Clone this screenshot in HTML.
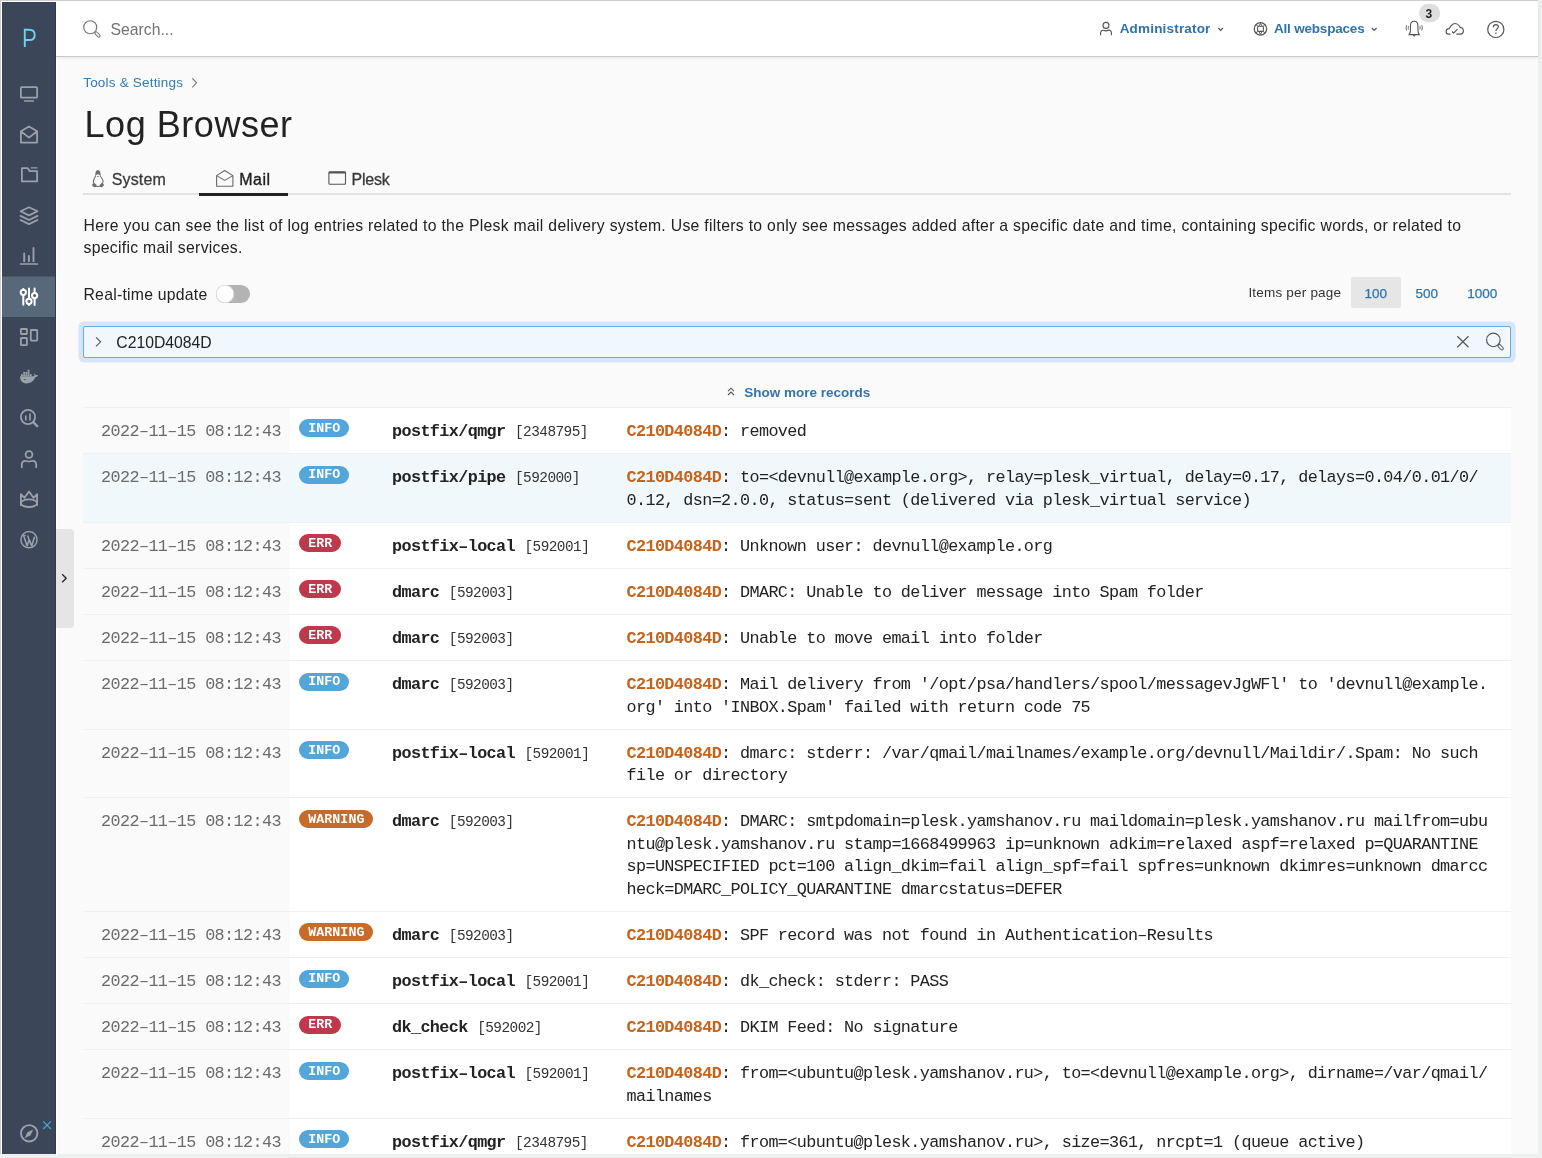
<!DOCTYPE html>
<html><head><meta charset="utf-8">
<style>
*{box-sizing:border-box;margin:0;padding:0}
html,body{width:1542px;height:1158px;overflow:hidden;background:#eef0ef;font-family:"Liberation Sans",sans-serif}
#frame{position:absolute;left:0;top:0;width:1538px;height:1154px;background:#fafafa;border-top:1px solid #cfcfd1;border-left:1px solid #cfcfd1;overflow:hidden}
#inner{position:absolute;left:0;top:0;width:1537px;height:1153px;border-top:1px solid #fff;border-left:1px solid #fff}
#sidebar{position:absolute;left:2px;top:2px;width:54px;height:1152px;background:#3b4758;border-right:1px solid #313c4c}
#wline{position:absolute;left:56px;top:56px;width:1px;height:1100px;background:#fff}
#header{position:absolute;left:56px;top:1px;width:1482px;height:55px;background:#fff;box-shadow:0 1px 0 #c8c8ca,0 2px 3px rgba(0,0,0,.08)}
.abs{position:absolute}
.mono{font-family:"Liberation Mono",monospace}
a{text-decoration:none}
body>*{will-change:transform}
/*TCSS*/
#table{position:absolute;left:83px;top:0;width:1428px;height:1154px;overflow:hidden}
.row{position:absolute;left:0;width:1428px;background:#fff;border-top:1px solid #f0f0f0;font-family:"Liberation Mono",monospace;font-size:16.8px;letter-spacing:-0.61px;line-height:22.5px;color:#222;white-space:nowrap}
.dcol{position:absolute;left:0;top:0;width:207px;background:#fafafa}
.date{position:absolute;left:18.1px;top:13px;color:#6b6b6b}
.badge{position:absolute;left:216.1px;top:11.4px;height:18px;border-radius:9px;padding:0.8px 8.6px 0 9.2px;font-size:13.3px;line-height:17.2px;font-weight:bold;color:#fff;letter-spacing:0.04px}
.prog{position:absolute;left:309px;top:13px}
.prog b{color:#222}
.pid{font-size:14.4px;letter-spacing:-0.54px;color:#333}
.msg{position:absolute;left:543.5px;top:13px}
.id{color:#c6621a}
/*/TCSS*/</style></head>
<body>
<div id="frame"><div id="inner"></div></div>
<div id="sidebar"></div>
<div id="wline"></div>
<svg class="abs" style="left:0;top:0" width="56" height="1158" viewBox="0 0 56 1158">
 <rect x="2" y="276.5" width="53" height="40.5" fill="#58687b"/>

 <g fill="none" stroke="#fff" stroke-width="2" stroke-linecap="round">
  <path d="M23.3 289 V290 M23.3 295 V304.8 M29 288.6 V298.7 M29 304 V305 M34.6 288.6 V292.7 M34.6 298.5 V305"/>
  <circle cx="23.3" cy="292.3" r="2.6"/>
  <circle cx="29" cy="301.3" r="2.6"/>
  <circle cx="34.6" cy="295.6" r="2.6"/>
 </g>
 <!-- P logo -->
 <path d="M24.8 47 V29.8 H29.4 C33 29.8 34.7 31.9 34.7 34.9 C34.7 37.9 33 40 29.4 40 H24.8" fill="none" stroke="#6fcff5" stroke-width="1.9"/>
 <g fill="none" stroke="#9aa1ab" stroke-width="1.8" stroke-linejoin="round" stroke-linecap="round">
  <!-- monitor -->
  <rect x="20.9" y="87.1" width="16.2" height="10.6" rx="0.8"/>
  <path d="M24.6 100.9 H33.4" stroke-width="1.5"/>
  <!-- envelope -->
  <path d="M20.9 131.3 L29 126.4 L37.1 131.3 V142.6 H20.9 Z M20.9 131.3 L29 137.6 L37.1 131.3"/>
  <!-- folder -->
  <path d="M21.9 168.1 H27.6 L29.6 171.1 H37.1 V181.4 H21.9 Z"/>
  <path d="M31.3 167.9 H37" stroke-width="1.4"/>
  <!-- layers -->
  <path d="M20.5 211.2 L29 207.2 L37.5 211.2 L29 215.4 Z"/>
  <path d="M20.5 215.9 L29 220 L37.5 215.9"/>
  <path d="M20.5 220 L29 224.1 L37.5 220"/>
  <!-- chart -->
  <path d="M24.2 253.5 V261.2 M28.9 256 V261.2 M33.5 248 V261.2" stroke-width="1.9"/>
  <path d="M20.6 264 H37.4" stroke-width="1.7"/>
  <!-- dashboard -->
  <rect x="20.9" y="329" width="6" height="5" rx="0.5"/>
  <rect x="20.9" y="338" width="6" height="7.2" rx="0.5"/>
  <rect x="30.8" y="330" width="6.4" height="10.6" rx="0.5"/>
  <!-- search chart -->
  <circle cx="28" cy="417" r="7.1"/>
  <path d="M33.2 422.2 L37.2 426.2" stroke-width="2.4"/>
  <path d="M25.8 416 V420 M30 414 V420" stroke-width="1.6"/>
  <!-- user -->
  <circle cx="29" cy="454.5" r="3.4"/>
  <path d="M21.8 467.2 V464.6 C21.8 462 23.5 460.8 25.5 460.8 C27.3 460.8 27.8 461.6 29 461.6 C30.2 461.6 30.7 460.8 32.5 460.8 C34.5 460.8 36.2 462 36.2 464.6 V467.2"/>
  <!-- crown -->
  <path d="M20.9 505 V494.2 L24.5 497.8 L29 491.5 L33.5 497.8 L37.1 494.2 V505"/>
  <ellipse cx="29" cy="503.2" rx="8.1" ry="3.8"/>
  <!-- wordpress -->
  <circle cx="29" cy="539.7" r="8.1" stroke-width="1.5"/>
 </g>
 <!-- docker -->
 <g fill="#9aa1ab">
  <path d="M19.9 376.3 H34.2 C34.6 375.6 34.5 374.6 34.1 373.2 C35 373.6 35.4 374.5 35.6 375.2 C36.5 375 37.3 375.2 38 375.5 C37.3 376.6 36.3 377.2 35.3 377.2 C34 380.8 30.5 383.4 26.3 383.4 C22.4 383.4 20.1 380.6 19.9 376.3 Z"/>
  <rect x="21" y="374.2" width="1.9" height="1.9"/><rect x="23.2" y="374.2" width="1.9" height="1.9"/><rect x="25.4" y="374.2" width="1.9" height="1.9"/><rect x="27.6" y="374.2" width="1.9" height="1.9"/><rect x="29.8" y="374.2" width="1.9" height="1.9"/>
  <rect x="23.2" y="372" width="1.9" height="1.9"/><rect x="25.4" y="372" width="1.9" height="1.9"/><rect x="27.6" y="372" width="1.9" height="1.9"/>
  <rect x="27.6" y="369.8" width="1.9" height="1.9"/>
 </g>
 <path d="M24.3 379.6 h1.3" stroke="#3b4758" stroke-width="1"/>
 <!-- WP W -->
 <g fill="none" stroke="#9aa1ab" stroke-width="1.6" stroke-linejoin="bevel"><path d="M23.6 535.6 L27.1 545.9 L29.2 539.6 L31.7 545.9 L34.6 536.8"/><path d="M22.2 535.3 H26" stroke-width="1"/><path d="M27.6 535.6 L29.9 542" stroke-width="1.4"/></g>
 <!-- compass -->
 <g fill="none" stroke="#9aa1ab" stroke-width="1.9">
  <circle cx="29.2" cy="1133.3" r="8.2"/>
 </g>
 <path d="M33.2 1129.4 L30.6 1135.2 L24.6 1138.3 L27.4 1132.3 Z" fill="#9aa1ab"/>
 <path d="M43.2 1121.3 L50.9 1129 M50.9 1121.3 L43.2 1129" stroke="#4aa8dc" stroke-width="1.1"/>
</svg>

<div id="header"></div>

<div id="page">
 <div class="abs" style="left:83.2px;top:74px;font-size:13.5px;color:#3679b3;line-height:18px;letter-spacing:0.2px">Tools &amp; Settings</div>
 <svg class="abs" style="left:190px;top:76px" width="10" height="14"><path d="M2.3 2.3 L6.5 6.8 L2.3 11.3" fill="none" stroke="#777" stroke-width="1.1"/></svg>
 <div class="abs" style="left:84.5px;top:103px;font-size:36px;color:#222;line-height:44px;letter-spacing:0.55px">Log Browser</div>
 <!-- tabs -->
 <div class="abs" style="left:83px;top:193px;width:1428px;height:2px;background:#e2e2e2"></div>
 <div class="abs" style="left:199.3px;top:192.6px;width:88.7px;height:3px;background:#222"></div>
 <svg class="abs" style="left:80px;top:160px" width="320" height="35" viewBox="80 160 320 35">
  <g fill="none" stroke="#555" stroke-width="1.2" stroke-linejoin="round">
   <path d="M216.6 175.6 L224.7 170.5 L232.9 175.6 V186.2 H216.6 Z M216.6 175.6 L224.7 180.4 L232.9 175.6" stroke="#6a6a6a" stroke-width="1.1"/>
   <rect x="328.9" y="171.8" width="16.6" height="12.4" rx="1" stroke="#555" stroke-width="1.1"/>
   <path d="M328.9 172.6 H345.5" stroke-width="1.8"/>
  </g>
  <g fill="#6e6e6e">
   <path d="M95.3 176.2 C95.1 172.3 96.1 170.1 97.9 170.1 C99.8 170.1 100.8 172.3 100.6 176.2 C99.9 174.9 98.9 174.2 97.9 174.2 C96.9 174.2 96 174.9 95.3 176.2 Z"/>
   <ellipse cx="94.4" cy="185.3" rx="2.3" ry="1.7" transform="rotate(20 94.4 185.3)"/>
   <ellipse cx="101.7" cy="185.2" rx="2.3" ry="1.7" transform="rotate(-30 101.7 185.2)"/>
  </g>
  <g fill="none" stroke="#6e6e6e" stroke-width="1.05">
   <path d="M95.6 175.6 C95.2 177.6 93.3 179.4 93.3 181.9 C93.3 182.9 93.9 183.7 95 184.2"/>
   <path d="M100.3 175.6 C100.8 177.6 103.1 179 103.1 181.4 C103.1 182.4 102.3 183.2 101.5 183.7"/>
   <path d="M95.6 186.4 H100.4"/>
   <path d="M96.9 176.5 H98.9" stroke-width="0.7"/>
  </g>
 </svg>
 <div class="abs" style="left:111.7px;top:169.3px;font-size:16px;color:#3a3a3a;line-height:22px;letter-spacing:0.15px;-webkit-text-stroke:0.3px #3a3a3a">System</div>
 <div class="abs" style="left:239.3px;top:169.3px;font-size:16px;color:#1e1e1e;line-height:22px;letter-spacing:0.45px;-webkit-text-stroke:0.35px #1e1e1e">Mail</div>
 <div class="abs" style="left:351.5px;top:169.3px;font-size:16px;color:#3a3a3a;line-height:22px;letter-spacing:-0.25px;-webkit-text-stroke:0.3px #3a3a3a">Plesk</div>
 <!-- description -->
 <div class="abs" style="left:83.5px;top:215.2px;width:1420px;font-size:15.75px;color:#222;line-height:22.3px;letter-spacing:0.3px">Here you can see the list of log entries related to the Plesk mail delivery system. Use filters to only see messages added after a specific date and time, containing specific words, or related to<br>specific mail services.</div>
 <div class="abs" style="left:83.5px;top:284px;font-size:15.75px;color:#222;line-height:22px;letter-spacing:0.25px">Real-time update</div>
 <div class="abs" style="left:216px;top:285.2px;width:33.5px;height:17.5px;border-radius:9px;background:#b3b3b3"></div>
 <div class="abs" style="left:216px;top:285.2px;width:17.5px;height:17.5px;border-radius:50%;background:#fff;box-shadow:0 0 0 0.6px #c9c9c9 inset"></div>
 <div class="abs" style="left:1248.4px;top:283.8px;font-size:13.5px;color:#333;line-height:18px;letter-spacing:0.2px">Items per page</div>
 <div class="abs" style="left:1350.7px;top:276.5px;width:50px;height:31.2px;border-radius:2px;background:#e6e6e6"></div>
 <div class="abs" style="left:1364.5px;top:284.7px;font-size:13.5px;color:#2f73ae;line-height:18px;-webkit-text-stroke:0.25px #2f73ae">100</div>
 <div class="abs" style="left:1415.5px;top:284.7px;font-size:13.5px;color:#2f73ae;line-height:18px;-webkit-text-stroke:0.25px #2f73ae">500</div>
 <div class="abs" style="left:1467.2px;top:284.7px;font-size:13.5px;color:#2f73ae;line-height:18px;-webkit-text-stroke:0.25px #2f73ae">1000</div>
 <!-- search input -->
 <div class="abs" style="left:83px;top:326px;width:1428px;height:32px;border:1px solid #68ade2;border-radius:2px;background:#f1f8fd;box-shadow:0 0 0 4.6px #d6e6f8"></div>
 <svg class="abs" style="left:90px;top:330px" width="20" height="24"><path d="M6 7.3 L10.6 11.8 L6 16.3" fill="none" stroke="#555" stroke-width="1.1"/></svg>
 <div class="abs" style="left:116.3px;top:332px;font-size:15.75px;color:#222;line-height:22px;letter-spacing:0px">C210D4084D</div>
 <svg class="abs" style="left:1450px;top:328px" width="60" height="28" viewBox="1450 328 60 28">
  <path d="M1457.3 336.3 L1468.5 347.3 M1468.5 336.3 L1457.3 347.3" stroke="#555" stroke-width="1.2" fill="none"/>
  <circle cx="1493.35" cy="339.9" r="6.8" fill="none" stroke="#555" stroke-width="1.15"/>
  <rect x="1498.3" y="343.5" width="6.5" height="2.8" rx="1.4" transform="rotate(45 1498.3 344.9)" fill="none" stroke="#555" stroke-width="1"/>
 </svg>
 <!-- show more -->
 <svg class="abs" style="left:724px;top:384px" width="14" height="14" viewBox="724 384 14 14"><path d="M728 391.2 L731 388.2 L734 391.2 M728 395 L731 392 L734 395" fill="none" stroke="#555" stroke-width="1.1"/></svg>
 <div class="abs" style="left:744.2px;top:384px;font-size:13.5px;font-weight:bold;color:#3574ad;line-height:18px;letter-spacing:0px">Show more records</div>
</div>



<div class="abs" style="left:56px;top:528.5px;width:17.7px;height:98.5px;background:#e5e5e5;border-radius:0 4px 4px 0"></div>
<svg class="abs" style="left:57px;top:528px" width="17" height="100"><path d="M5.2 46.2 L9.2 50.2 L5.2 54.2" fill="none" stroke="#222" stroke-width="1.3"/></svg>






<!--TABLE--><div id="table"><div class="row" style="top:407.0px;height:46.125px"><div class="dcol" style="height:45.125px"></div><div class="date">2022&#8211;11&#8211;15 08:12:43</div><div class="badge" style="background:#52a6da">INFO</div><div class="prog"><b>postfix/qmgr</b> <span class="pid">[2348795]</span></div><div class="msg"><b class="id">C210D4084D</b>: removed</div></div>
<div class="row" style="top:453.125px;height:68.625px;background:#f1f8fc"><div class="date">2022&#8211;11&#8211;15 08:12:43</div><div class="badge" style="background:#52a6da">INFO</div><div class="prog"><b>postfix/pipe</b> <span class="pid">[592000]</span></div><div class="msg"><b class="id">C210D4084D</b>: to=&lt;devnull@example.org&gt;, relay=plesk_virtual, delay=0.17, delays=0.04/0.01/0/<br>0.12, dsn=2.0.0, status=sent (delivered via plesk_virtual service)</div></div>
<div class="row" style="top:521.75px;height:46.125px"><div class="dcol" style="height:45.125px"></div><div class="date">2022&#8211;11&#8211;15 08:12:43</div><div class="badge" style="background:#bf384c">ERR</div><div class="prog"><b>postfix&#8211;local</b> <span class="pid">[592001]</span></div><div class="msg"><b class="id">C210D4084D</b>: Unknown user: devnull@example.org</div></div>
<div class="row" style="top:567.875px;height:46.125px"><div class="dcol" style="height:45.125px"></div><div class="date">2022&#8211;11&#8211;15 08:12:43</div><div class="badge" style="background:#bf384c">ERR</div><div class="prog"><b>dmarc</b> <span class="pid">[592003]</span></div><div class="msg"><b class="id">C210D4084D</b>: DMARC: Unable to deliver message into Spam folder</div></div>
<div class="row" style="top:614.0px;height:46.125px"><div class="dcol" style="height:45.125px"></div><div class="date">2022&#8211;11&#8211;15 08:12:43</div><div class="badge" style="background:#bf384c">ERR</div><div class="prog"><b>dmarc</b> <span class="pid">[592003]</span></div><div class="msg"><b class="id">C210D4084D</b>: Unable to move email into folder</div></div>
<div class="row" style="top:660.125px;height:68.625px"><div class="dcol" style="height:67.625px"></div><div class="date">2022&#8211;11&#8211;15 08:12:43</div><div class="badge" style="background:#52a6da">INFO</div><div class="prog"><b>dmarc</b> <span class="pid">[592003]</span></div><div class="msg"><b class="id">C210D4084D</b>: Mail delivery from &#x27;/opt/psa/handlers/spool/messagevJgWFl&#x27; to &#x27;devnull@example.<br>org&#x27; into &#x27;INBOX.Spam&#x27; failed with return code 75</div></div>
<div class="row" style="top:728.75px;height:68.625px"><div class="dcol" style="height:67.625px"></div><div class="date">2022&#8211;11&#8211;15 08:12:43</div><div class="badge" style="background:#52a6da">INFO</div><div class="prog"><b>postfix&#8211;local</b> <span class="pid">[592001]</span></div><div class="msg"><b class="id">C210D4084D</b>: dmarc: stderr: /var/qmail/mailnames/example.org/devnull/Maildir/.Spam: No such<br>file or directory</div></div>
<div class="row" style="top:797.375px;height:113.625px"><div class="dcol" style="height:112.625px"></div><div class="date">2022&#8211;11&#8211;15 08:12:43</div><div class="badge" style="background:#c86a2a">WARNING</div><div class="prog"><b>dmarc</b> <span class="pid">[592003]</span></div><div class="msg"><b class="id">C210D4084D</b>: DMARC: smtpdomain=plesk.yamshanov.ru maildomain=plesk.yamshanov.ru mailfrom=ubu<br>ntu@plesk.yamshanov.ru stamp=1668499963 ip=unknown adkim=relaxed aspf=relaxed p=QUARANTINE<br>sp=UNSPECIFIED pct=100 align_dkim=fail align_spf=fail spfres=unknown dkimres=unknown dmarcc<br>heck=DMARC_POLICY_QUARANTINE dmarcstatus=DEFER</div></div>
<div class="row" style="top:911.0px;height:46.125px"><div class="dcol" style="height:45.125px"></div><div class="date">2022&#8211;11&#8211;15 08:12:43</div><div class="badge" style="background:#c86a2a">WARNING</div><div class="prog"><b>dmarc</b> <span class="pid">[592003]</span></div><div class="msg"><b class="id">C210D4084D</b>: SPF record was not found in Authentication&#8211;Results</div></div>
<div class="row" style="top:957.125px;height:46.125px"><div class="dcol" style="height:45.125px"></div><div class="date">2022&#8211;11&#8211;15 08:12:43</div><div class="badge" style="background:#52a6da">INFO</div><div class="prog"><b>postfix&#8211;local</b> <span class="pid">[592001]</span></div><div class="msg"><b class="id">C210D4084D</b>: dk_check: stderr: PASS</div></div>
<div class="row" style="top:1003.25px;height:46.125px"><div class="dcol" style="height:45.125px"></div><div class="date">2022&#8211;11&#8211;15 08:12:43</div><div class="badge" style="background:#bf384c">ERR</div><div class="prog"><b>dk_check</b> <span class="pid">[592002]</span></div><div class="msg"><b class="id">C210D4084D</b>: DKIM Feed: No signature</div></div>
<div class="row" style="top:1049.375px;height:68.625px"><div class="dcol" style="height:67.625px"></div><div class="date">2022&#8211;11&#8211;15 08:12:43</div><div class="badge" style="background:#52a6da">INFO</div><div class="prog"><b>postfix&#8211;local</b> <span class="pid">[592001]</span></div><div class="msg"><b class="id">C210D4084D</b>: from=&lt;ubuntu@plesk.yamshanov.ru&gt;, to=&lt;devnull@example.org&gt;, dirname=/var/qmail/<br>mailnames</div></div>
<div class="row" style="top:1118.0px;height:46.125px"><div class="dcol" style="height:45.125px"></div><div class="date">2022&#8211;11&#8211;15 08:12:43</div><div class="badge" style="background:#52a6da">INFO</div><div class="prog"><b>postfix/qmgr</b> <span class="pid">[2348795]</span></div><div class="msg"><b class="id">C210D4084D</b>: from=&lt;ubuntu@plesk.yamshanov.ru&gt;, size=361, nrcpt=1 (queue active)</div></div></div><!--/TABLE-->
<div id="hcontent">
 <svg class="abs" style="left:0;top:0" width="1542" height="60" viewBox="0 0 1542 60">
  <g fill="none" stroke="#737373" stroke-width="1.3">
   <circle cx="90.25" cy="27.25" r="6.5" stroke-width="1.15"/>
   <rect x="95.3" y="30.9" width="6.3" height="2.7" rx="1.35" transform="rotate(45 95.3 32.25)" stroke-width="1"/>
  </g>
  <g fill="none" stroke="#555" stroke-width="1.2">
   <circle cx="1105.95" cy="25.4" r="2.95" stroke-width="1.15"/>
   <path d="M1100.6 35.2 V33.6 C1100.6 31.3 1101.6 30.2 1103.2 30.2 C1104.6 30.2 1105.2 30.9 1106 30.9 C1106.8 30.9 1107.4 30.2 1108.8 30.2 C1110.4 30.2 1111.4 31.3 1111.4 33.6 V35.2" stroke-width="1.15"/>
   <path d="M1218.3 28 L1220.6 30.4 L1222.9 28" stroke-width="1.3"/>
   <circle cx="1260.45" cy="28.9" r="6.2" stroke-width="1.2"/>
   <rect x="1257.6" y="26.2" width="5.8" height="5.2" rx="1.2" stroke-width="1.1"/>
   <path d="M1257.6 26.4 L1256.1 24.3 M1263.4 26.4 L1264.9 24.3 M1257.6 31.2 L1256.1 33.4 M1263.4 31.2 L1264.9 33.4 M1258.8 26.2 L1260.45 23.4 L1262.1 26.2 M1258.8 31.4 L1260.45 34.3 L1262.1 31.4" stroke-width="1"/>
   <path d="M1371.9 28 L1374.2 30.4 L1376.5 28" stroke-width="1.3"/>
   <!-- bell -->
   <path d="M1409.2 34.6 C1410.3 33.4 1410.5 31.5 1410.5 29 V25.8 C1410.5 23 1412 21.3 1414.2 21.3 C1416.4 21.3 1417.9 23 1417.9 25.8 V29 C1417.9 31.5 1418.1 33.4 1419.2 34.6 Z" stroke-width="1.1"/>
   <path d="M1413.2 35.2 L1414.2 36.1 L1415.2 35.2" stroke-width="1.1"/>
   <path d="M1406.8 25.2 C1405.9 26.8 1405.9 28.8 1406.8 30.4 M1421.6 25.2 C1422.5 26.8 1422.5 28.8 1421.6 30.4 M1408.6 26.2 C1408.1 27.2 1408.1 28.4 1408.6 29.4 M1419.8 26.2 C1420.3 27.2 1420.3 28.4 1419.8 29.4" stroke-width="0.9"/>
   <!-- cloud -->
   <path d="M1450.5 34.1 H1448.6 C1447 34.1 1446.1 32.9 1446.1 31.5 C1446.1 29.9 1447.3 28.7 1448.9 28.6 L1449.2 28.6 C1449.8 27.6 1450.3 26.6 1451.2 25.6 C1452.5 24.2 1453.9 23.5 1455.2 23.5 C1457 23.5 1458.3 24.6 1459.3 26 L1460.2 27.4 C1462.2 27.6 1463.4 29.1 1463.4 30.8 C1463.4 32.6 1462 34.1 1460.2 34.1 H1456.4" stroke-width="1.15"/>
   <path d="M1452.1 31.5 L1453.6 33.2 L1457.5 29.2" stroke-width="1.15"/>
   <!-- help -->
   <circle cx="1495.8" cy="29.4" r="8.1" stroke-width="1.2"/>
   <path d="M1493.4 27.2 C1493.4 25.5 1494.5 24.6 1495.9 24.6 C1497.4 24.6 1498.3 25.6 1498.3 26.8 C1498.3 28.4 1496 28.9 1495.9 31" stroke-width="1.2"/>
  </g>
  <circle cx="1495.9" cy="33.2" r="0.8" fill="#555"/>
  <rect x="1419" y="3.8" width="21.2" height="18.5" rx="9.25" fill="#dedede"/>
  <text x="1428.9" y="18" text-anchor="middle" font-family="Liberation Sans" font-weight="bold" font-size="12" fill="#222">3</text>
 </svg>
 <div class="abs" style="left:110.5px;top:20px;font-size:15.75px;color:#737373;line-height:20px">Search...</div>
 <div class="abs" style="left:1119.7px;top:19.5px;font-size:13.5px;font-weight:bold;color:#2f73ae;line-height:18px;letter-spacing:0.18px">Administrator</div>
 <div class="abs" style="left:1274px;top:19.5px;font-size:13.5px;font-weight:bold;color:#2f73ae;line-height:18px;letter-spacing:-0.2px">All webspaces</div>
</div>

</body></html>
